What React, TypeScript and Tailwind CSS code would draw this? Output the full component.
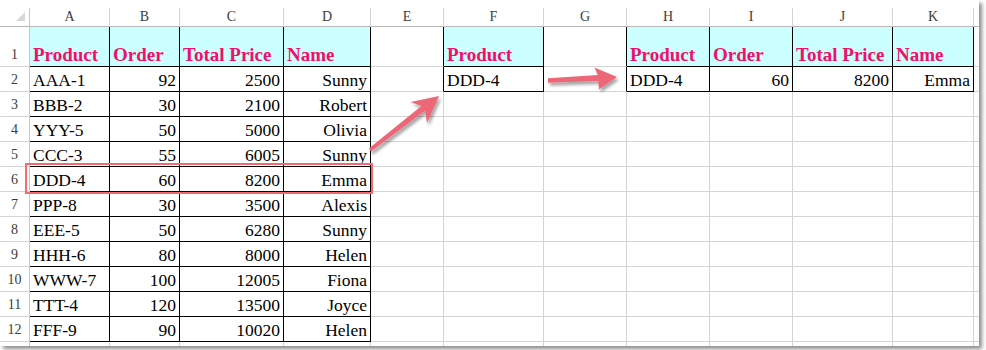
import React from 'react';

type Cell = { text?: string | number; right?: boolean; head?: boolean; cyan?: boolean };

const COLS = ['A', 'B', 'C', 'D', 'E', 'F', 'G', 'H', 'I', 'J', 'K', ''];

const DATA: [string, number, number, string][] = [
  ['AAA-1', 92, 2500, 'Sunny'],
  ['BBB-2', 30, 2100, 'Robert'],
  ['YYY-5', 50, 5000, 'Olivia'],
  ['CCC-3', 55, 6005, 'Sunny'],
  ['DDD-4', 60, 8200, 'Emma'],
  ['PPP-8', 30, 3500, 'Alexis'],
  ['EEE-5', 50, 6280, 'Sunny'],
  ['HHH-6', 80, 8000, 'Helen'],
  ['WWW-7', 100, 12005, 'Fiona'],
  ['TTT-4', 120, 13500, 'Joyce'],
  ['FFF-9', 90, 10020, 'Helen'],
];

// black bordered ranges: A1:D12, F1:F2, H1:K2
const inBox = (r: number, c: number) =>
  (r >= 1 && r <= 12 && c >= 0 && c <= 3) ||
  (r >= 1 && r <= 2 && c === 5) ||
  (r >= 1 && r <= 2 && c >= 7 && c <= 10);

function buildRows(): Cell[][] {
  const rows: Cell[][] = [];
  for (let r = 1; r <= 13; r++) {
    rows.push(COLS.map(() => ({})));
  }
  const headers = ['Product', 'Order', 'Total Price', 'Name'];
  headers.forEach((h, i) => {
    rows[0][i] = { text: h, head: true, cyan: true };
    rows[0][7 + i] = { text: h, head: true, cyan: true };
  });
  rows[0][5] = { text: 'Product', head: true, cyan: true };
  DATA.forEach((d, i) => {
    rows[i + 1][0] = { text: d[0] };
    rows[i + 1][1] = { text: d[1], right: true };
    rows[i + 1][2] = { text: d[2], right: true };
    rows[i + 1][3] = { text: d[3], right: true };
  });
  rows[1][5] = { text: 'DDD-4' };
  rows[1][7] = { text: 'DDD-4' };
  rows[1][8] = { text: 60, right: true };
  rows[1][9] = { text: 8200, right: true };
  rows[1][10] = { text: 'Emma', right: true };
  return rows;
}

const Arrows = () => (
  <svg className="absolute left-0 top-0 pointer-events-none" width="986" height="350" viewBox="0 0 986 350">
    <defs>
      <filter id="sh" x="-20%" y="-20%" width="140%" height="160%">
        <feDropShadow dx="2" dy="3" stdDeviation="1.6" floodColor="#000" floodOpacity="0.35" />
      </filter>
    </defs>
    <polygon
      filter="url(#sh)"
      fill="#ec6878"
      points="368.8,148.4 421.4,105.9 410.5,102 439,96 427,123 425,110.7 371.2,151.6"
    />
    <polygon
      filter="url(#sh)"
      fill="#ec6878"
      points="548,78.3 597.8,75 594.5,67.5 617,77 599,89.5 598.2,81 548,82.7"
    />
  </svg>
);

export default function App() {
  const rows = buildRows();
  return (
    <div className="relative w-[986px] h-[350px] bg-white overflow-hidden [font-family:'Liberation_Serif',serif]">
      <div className="w-[979px] h-[346px] pt-[8px] bg-white overflow-hidden shadow-[3px_3px_4px_rgba(0,0,0,0.45)]">
        <div className="grid grid-cols-[30px_80px_70px_104px_87px_73px_100px_83px_83px_83px_100px_81px_1fr] grid-rows-[19px_40px_repeat(12,25px)]">
          {/* column header row */}
          <div className="relative border-r border-b border-r-[#c6c6c6] border-b-[#b8b8b8]">
            <div className="absolute left-[16px] top-[4px] w-0 h-0 border-l-[9px] border-l-transparent border-b-[9px] border-b-[#d8d8d8]" />
          </div>
          {COLS.map((c, i) => (
            <div
              key={'h' + i}
              className="flex items-center justify-center border-r border-b border-r-[#d4d4d4] border-b-[#b8b8b8] text-[14px] leading-[18px] text-[#3c3c3c]"
            >
              {c}
            </div>
          ))}

          {rows.map((row, ri) => {
            const r = ri + 1;
            return (
              <React.Fragment key={r}>
                <div className="flex items-end justify-center pb-[2px] border-r border-b border-r-[#c6c6c6] border-b-[#d4d4d4] text-[14px] leading-[18px] text-[#3c3c3c]">
                  {r}
                </div>
                {row.map((cell, c) => {
                  const rb = inBox(r, c) || inBox(r, c + 1);
                  const bb = inBox(r, c);
                  return (
                    <div
                      key={c}
                      className={
                        'flex items-end px-[3px] pb-[1px] whitespace-nowrap border-r border-b ' +
                        (rb ? 'border-r-black ' : 'border-r-[#d4d4d4] ') +
                        (bb ? 'border-b-black ' : 'border-b-[#d4d4d4] ') +
                        (cell.cyan ? 'bg-[#ccffff] ' : 'bg-white ') +
                        (cell.right ? 'justify-end ' : 'justify-start ') +
                        (cell.head
                          ? 'text-[19px] leading-[20px] font-bold text-[#f0106a]'
                          : 'text-[17.5px] leading-[20px] text-black')
                      }
                    >
                      {cell.text}
                    </div>
                  );
                })}
              </React.Fragment>
            );
          })}
        </div>
      </div>

      {/* highlight around row 6 */}
      <div className="absolute left-[25px] top-[163px] w-[348px] h-[31px] border-2 border-[#f4696f] pointer-events-none" />
      <Arrows />
    </div>
  );
}
